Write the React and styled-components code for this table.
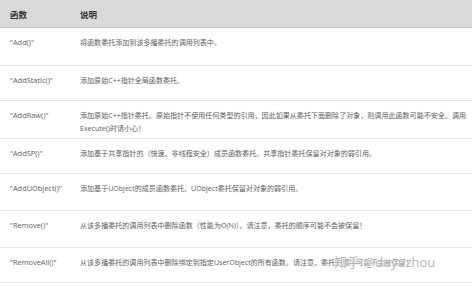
import React from "react";
import styled, { createGlobalStyle } from "styled-components";

const GlobalStyle = createGlobalStyle`
  html, body {
    margin: 0;
    padding: 0;
    background: #ffffff;
  }
`;

const rows = [
  { name: "\"Add()\"", desc: "将函数委托添加到该多播委托的调用列表中。", h: 38 },
  { name: "\"AddStatic()\"", desc: "添加原始C++指针全局函数委托。", h: 35 },
  {
    name: "\"AddRaw()\"",
    desc: "添加原始C++指针委托。原始指针不使用任何类型的引用，因此如果从委托下面删除了对象，则调用此函数可能不安全。调用Execute()时请小心！",
    h: 38,
  },
  {
    name: "\"AddSP()\"",
    desc: "添加基于共享指针的（快速、非线程安全）成员函数委托。共享指针委托保留对对象的弱引用。",
    h: 35,
  },
  {
    name: "\"AddUObject()\"",
    desc: "添加基于UObject的成员函数委托。UObject委托保留对对象的弱引用。",
    h: 37,
  },
  {
    name: "\"Remove()\"",
    desc: "从该多播委托的调用列表中删除函数（性能为O(N)）。请注意，委托的顺序可能不会被保留！",
    h: 37,
  },
  {
    name: "\"RemoveAll()\"",
    desc: "从该多播委托的调用列表中删除绑定到指定UserObject的所有函数。请注意，委托的顺序可能不会被保留！",
    h: 35,
  },
];

const Page = styled.div`
  position: relative;
  width: 474px;
  height: 283px;
  overflow: hidden;
  font-family: "Open Sans", "Noto Sans CJK SC", sans-serif;
`;

const Table = styled.div`
  display: flex;
  flex-direction: column;
  width: 472px;
`;

const Row = styled.div`
  display: grid;
  grid-template-columns: 70px 1fr;
  box-sizing: border-box;
  min-height: ${({ $h }) => $h}px;
  padding: ${({ $head }) => ($head ? "0 8px 0 10px" : "8px 0 0 10px")};
  align-items: ${({ $head }) => ($head ? "center" : "start")};
  background: ${({ $head }) => ($head ? "#d9d9d9" : "#ffffff")};
  border-bottom: ${({ $head }) => ($head ? "1px solid #d0d0d0" : "1px solid #e6e6e6")};
`;

const HeadCell = styled.div`
  font-size: 8.5px;
  font-weight: 700;
  color: #333333;
`;

const Name = styled.div`
  font-size: 7.4px;
  line-height: 13px;
  color: #5e5e5e;
`;

const Desc = styled.div`
  font-size: 7.05px;
  line-height: 13px;
  color: #5e5e5e;
`;

const Watermark = styled.div`
  position: absolute;
  left: 334px;
  top: 252px;
  font-size: 13px;
  color: rgba(175, 175, 175, 0.95);
  text-shadow: 0 0 2px #ffffff, 0 0 2px #ffffff;
  white-space: nowrap;
`;

export default function App() {
  return (
    <Page>
      <GlobalStyle />
      <Table>
        <Row $head $h={28}>
          <HeadCell>函数</HeadCell>
          <HeadCell>说明</HeadCell>
        </Row>
        {rows.map((r) => (
          <Row key={r.name} $h={r.h}>
            <Name>{r.name}</Name>
            <Desc>{r.desc}</Desc>
          </Row>
        ))}
      </Table>
      <Watermark>知乎 @duyuzhou</Watermark>
    </Page>
  );
}
